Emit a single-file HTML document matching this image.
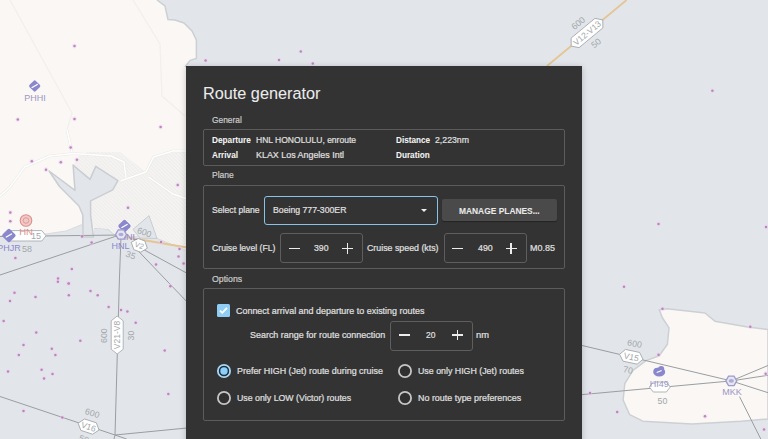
<!DOCTYPE html>
<html><head><meta charset="utf-8"><style>
html,body{margin:0;padding:0;}
body{width:768px;height:439px;overflow:hidden;position:relative;background:#e1e5e9;font-family:"Liberation Sans",sans-serif;}
.map{position:absolute;left:0;top:0;}
.t{position:absolute;white-space:nowrap;-webkit-text-stroke:0.2px currentColor;}
.dlg{position:absolute;background:#333333;box-shadow:0 1px 6px rgba(0,0,0,0.22);}
.box{position:absolute;border:1px solid #5c5c5c;border-radius:2px;}
.sel{position:absolute;border:1.6px solid #86c4ea;border-radius:3px;box-sizing:border-box;}
.caret{position:absolute;width:0;height:0;border-left:3.3px solid transparent;border-right:3.3px solid transparent;border-top:3.6px solid #f0f0f0;}
.btn{position:absolute;background:#4a4a4a;border-radius:2px;box-shadow:0 1px 1px rgba(0,0,0,0.3);}
.step{position:absolute;border:1px solid #5e5e5e;border-radius:3px;box-sizing:border-box;}
.minus{position:absolute;height:1.6px;background:#ececec;}
.vbar{position:absolute;width:1.6px;background:#ececec;}
.chk{position:absolute;width:13px;height:13px;background:#8fcdf5;border-radius:1.5px;}
.chk svg{position:absolute;left:0;top:0;}
.rd{position:absolute;}
</style></head>
<body>
<svg class="map" width="768" height="439" viewBox="0 0 768 439"><rect width="768" height="439" fill="#e2e6ea"/>
<polygon points="0,0 157,0 165,6 168,19.5 175,20 184,23 192,31 196.4,40 196.4,58.5 190.2,60.4 186.7,64.7 185,67 200,70 200,252 186,250 157,238 132,236 114,234 108,229 94,228 94,236 82,236 82,224.6 66,231 46,234 0,236" fill="#faf7f4"/>
<polyline points="157,0 165,6 168,19.5 175,20 184,23 192,31 196.4,40 196.4,58.5 190.2,60.4 186.7,64.7 185,67" fill="none" stroke="#cdd0d3" stroke-width="1.5"/>
<polyline points="186,250 157,238 132,236 114,234 108,229 94,228" fill="none" stroke="#cdd0d3" stroke-width="1.2"/>
<polyline points="82,224.6 66,231 46,234 0,236" fill="none" stroke="#d9dbdc" stroke-width="1"/>
<defs><pattern id="hatch" width="2.6" height="2.6" patternUnits="userSpaceOnUse" patternTransform="rotate(-45)">
<rect width="2.6" height="2.6" fill="#f4f3f2"/><line x1="0" y1="0" x2="0" y2="2.6" stroke="#e6e5e4" stroke-width="0.8"/></pattern></defs>
<polygon points="88,152 120,152 146,172 153.5,157 186,150 200,150 200,252 186,250 157,238 132,236 114,234 108,229 94,228 90.6,215 90.6,200.8 112.7,189.8 117.9,180.7 95.8,166.4 90,179.4 75,190.4 73.1,165.1 80,155" fill="url(#hatch)"/>
<polygon points="49.1,171 75,190.4 73.1,165.1 90,179.4 95.8,166.4 117.9,180.7 112.7,189.8 90.6,200.8 90.6,215 92.3,227.9 93.5,237 83,237 82.8,215 79,206 59.5,186.5" fill="#e2e6ea" stroke="#cacdd1" stroke-width="1.5" stroke-linejoin="round"/>
<polygon points="133,229.4 149,215.7 157,238.5 140,238" fill="#e2e6ea" stroke="#c9ccd0" stroke-width="1"/>
<polyline points="0,196 10,187 24.7,167 49.5,156 74,153.5 111,156 124,162 126,178" fill="none" stroke="#e9e8e6" stroke-width="2.6" stroke-linejoin="round"/>
<polyline points="0,196 10,187 24.7,167 49.5,156 74,153.5 111,156 124,162 126,178" fill="none" stroke="#ffffff" stroke-width="1.5" stroke-linejoin="round"/>
<polyline points="121,180.7 146,172 153.5,157 173,151 190,151" fill="none" stroke="#e9e8e6" stroke-width="2.6" stroke-linejoin="round"/>
<polyline points="121,180.7 146,172 153.5,157 173,151 190,151" fill="none" stroke="#ffffff" stroke-width="1.5" stroke-linejoin="round"/>
<polyline points="148.5,177 173,194 190,200" fill="none" stroke="#e9e8e6" stroke-width="2.6" stroke-linejoin="round"/>
<polyline points="148.5,177 173,194 190,200" fill="none" stroke="#ffffff" stroke-width="1.5" stroke-linejoin="round"/>
<polyline points="67,130 72,152" fill="none" stroke="#e9e8e6" stroke-width="2.6" stroke-linejoin="round"/>
<polyline points="67,130 72,152" fill="none" stroke="#ffffff" stroke-width="1.5" stroke-linejoin="round"/>
<polyline points="10,0 72,113 67,130" fill="none" stroke="#f1f0ee" stroke-width="1.2"/>
<polyline points="133,0 160,44 162,96 185,116" fill="none" stroke="#f1f0ee" stroke-width="1.2"/>
<polygon points="659.2,309.8 667.4,308.8 705,313 714.9,321.2 747.7,327.1 768,329.4 768,419 741,421.2 692,423.9 642.8,421.2 629.7,414.7 623.1,400 624.8,383.5 633,370.4 646,360.6 659.2,355.7 667.4,344.2 669,327.8 662.5,318" fill="#faf7f4" stroke="#cdd0d3" stroke-width="1.5" stroke-linejoin="round"/>
<polyline points="0,236.5 121,235" fill="none" stroke="#9a9ea2" stroke-width="1"/>
<polyline points="0,275 121,234.5" fill="none" stroke="#9a9ea2" stroke-width="1"/>
<polyline points="121,236 119.4,280 115,435 114,439" fill="none" stroke="#9a9ea2" stroke-width="1"/>
<polyline points="0,396.5 115,435 126.7,439" fill="none" stroke="#9a9ea2" stroke-width="1"/>
<polyline points="115,435 190,427.7" fill="none" stroke="#9a9ea2" stroke-width="1"/>
<polyline points="142.6,249 187.8,273.7" fill="none" stroke="#9a9ea2" stroke-width="1"/>
<polyline points="136.4,249 190,305" fill="none" stroke="#9a9ea2" stroke-width="1"/>
<polyline points="580,345 731.3,380.9 768,392.7" fill="none" stroke="#9a9ea2" stroke-width="1"/>
<polyline points="580,394.8 731.3,380.9" fill="none" stroke="#9a9ea2" stroke-width="1"/>
<polyline points="731.3,380.9 768,365.5" fill="none" stroke="#9a9ea2" stroke-width="1"/>
<polyline points="731.3,380.9 768,375.3" fill="none" stroke="#9a9ea2" stroke-width="1"/>
<polyline points="739.5,396.6 760.8,439" fill="none" stroke="#9a9ea2" stroke-width="1"/>
<polyline points="125,237 190,248" fill="none" stroke="#e6c594" stroke-width="1.8"/>
<polyline points="547,66 626.6,0" fill="none" stroke="#e6c594" stroke-width="1.8"/>
<circle cx="74.5" cy="46" r="2.4" fill="#ecd2ef" opacity="0.45"/><circle cx="74.5" cy="46" r="1.25" fill="#bd84bd"/>
<circle cx="17.8" cy="119.6" r="2.4" fill="#ecd2ef" opacity="0.45"/><circle cx="17.8" cy="119.6" r="1.25" fill="#bd84bd"/>
<circle cx="74.5" cy="119" r="2.4" fill="#ecd2ef" opacity="0.45"/><circle cx="74.5" cy="119" r="1.25" fill="#bd84bd"/>
<circle cx="160.6" cy="127" r="2.4" fill="#ecd2ef" opacity="0.45"/><circle cx="160.6" cy="127" r="1.25" fill="#bd84bd"/>
<circle cx="70.7" cy="147.5" r="2.4" fill="#ecd2ef" opacity="0.45"/><circle cx="70.7" cy="147.5" r="1.25" fill="#bd84bd"/>
<circle cx="205.6" cy="60.4" r="2.4" fill="#ecd2ef" opacity="0.45"/><circle cx="205.6" cy="60.4" r="1.25" fill="#bd84bd"/>
<circle cx="279" cy="60" r="2.4" fill="#ecd2ef" opacity="0.45"/><circle cx="279" cy="60" r="1.25" fill="#bd84bd"/>
<circle cx="31.8" cy="161.2" r="2.4" fill="#ecd2ef" opacity="0.45"/><circle cx="31.8" cy="161.2" r="1.25" fill="#bd84bd"/>
<circle cx="60.8" cy="162.2" r="2.4" fill="#ecd2ef" opacity="0.45"/><circle cx="60.8" cy="162.2" r="1.25" fill="#bd84bd"/>
<circle cx="76.9" cy="159.8" r="2.4" fill="#ecd2ef" opacity="0.45"/><circle cx="76.9" cy="159.8" r="1.25" fill="#bd84bd"/>
<circle cx="46" cy="169.7" r="2.4" fill="#ecd2ef" opacity="0.45"/><circle cx="46" cy="169.7" r="1.25" fill="#bd84bd"/>
<circle cx="177.7" cy="185" r="2.4" fill="#ecd2ef" opacity="0.45"/><circle cx="177.7" cy="185" r="1.25" fill="#bd84bd"/>
<circle cx="128" cy="207.7" r="2.4" fill="#ecd2ef" opacity="0.45"/><circle cx="128" cy="207.7" r="1.25" fill="#bd84bd"/>
<circle cx="10.3" cy="212.5" r="2.4" fill="#ecd2ef" opacity="0.45"/><circle cx="10.3" cy="212.5" r="1.25" fill="#bd84bd"/>
<circle cx="10.3" cy="221.3" r="2.4" fill="#ecd2ef" opacity="0.45"/><circle cx="10.3" cy="221.3" r="1.25" fill="#bd84bd"/>
<circle cx="82" cy="236.4" r="2.4" fill="#ecd2ef" opacity="0.45"/><circle cx="82" cy="236.4" r="1.25" fill="#bd84bd"/>
<circle cx="91.6" cy="242.5" r="2.4" fill="#ecd2ef" opacity="0.45"/><circle cx="91.6" cy="242.5" r="1.25" fill="#bd84bd"/>
<circle cx="15.4" cy="258" r="2.4" fill="#ecd2ef" opacity="0.45"/><circle cx="15.4" cy="258" r="1.25" fill="#bd84bd"/>
<circle cx="71.8" cy="269" r="2.4" fill="#ecd2ef" opacity="0.45"/><circle cx="71.8" cy="269" r="1.25" fill="#bd84bd"/>
<circle cx="58" cy="278.4" r="2.4" fill="#ecd2ef" opacity="0.45"/><circle cx="58" cy="278.4" r="1.25" fill="#bd84bd"/>
<circle cx="68.4" cy="283.5" r="2.4" fill="#ecd2ef" opacity="0.45"/><circle cx="68.4" cy="283.5" r="1.25" fill="#bd84bd"/>
<circle cx="57.9" cy="281.8" r="2.4" fill="#ecd2ef" opacity="0.45"/><circle cx="57.9" cy="281.8" r="1.25" fill="#bd84bd"/>
<circle cx="68.8" cy="283.6" r="2.4" fill="#ecd2ef" opacity="0.45"/><circle cx="68.8" cy="283.6" r="1.25" fill="#bd84bd"/>
<circle cx="14.5" cy="292.7" r="2.4" fill="#ecd2ef" opacity="0.45"/><circle cx="14.5" cy="292.7" r="1.25" fill="#bd84bd"/>
<circle cx="10" cy="301" r="2.4" fill="#ecd2ef" opacity="0.45"/><circle cx="10" cy="301" r="1.25" fill="#bd84bd"/>
<circle cx="35.5" cy="297" r="2.4" fill="#ecd2ef" opacity="0.45"/><circle cx="35.5" cy="297" r="1.25" fill="#bd84bd"/>
<circle cx="68.8" cy="295.2" r="2.4" fill="#ecd2ef" opacity="0.45"/><circle cx="68.8" cy="295.2" r="1.25" fill="#bd84bd"/>
<circle cx="90.5" cy="290.9" r="2.4" fill="#ecd2ef" opacity="0.45"/><circle cx="90.5" cy="290.9" r="1.25" fill="#bd84bd"/>
<circle cx="97.7" cy="295.2" r="2.4" fill="#ecd2ef" opacity="0.45"/><circle cx="97.7" cy="295.2" r="1.25" fill="#bd84bd"/>
<circle cx="108.6" cy="307" r="2.4" fill="#ecd2ef" opacity="0.45"/><circle cx="108.6" cy="307" r="1.25" fill="#bd84bd"/>
<circle cx="121" cy="310" r="2.4" fill="#ecd2ef" opacity="0.45"/><circle cx="121" cy="310" r="1.25" fill="#bd84bd"/>
<circle cx="127.4" cy="311.5" r="2.4" fill="#ecd2ef" opacity="0.45"/><circle cx="127.4" cy="311.5" r="1.25" fill="#bd84bd"/>
<circle cx="135.7" cy="322.7" r="2.4" fill="#ecd2ef" opacity="0.45"/><circle cx="135.7" cy="322.7" r="1.25" fill="#bd84bd"/>
<circle cx="3.6" cy="321" r="2.4" fill="#ecd2ef" opacity="0.45"/><circle cx="3.6" cy="321" r="1.25" fill="#bd84bd"/>
<circle cx="36.2" cy="332.5" r="2.4" fill="#ecd2ef" opacity="0.45"/><circle cx="36.2" cy="332.5" r="1.25" fill="#bd84bd"/>
<circle cx="80.3" cy="340.8" r="2.4" fill="#ecd2ef" opacity="0.45"/><circle cx="80.3" cy="340.8" r="1.25" fill="#bd84bd"/>
<circle cx="23.5" cy="345" r="2.4" fill="#ecd2ef" opacity="0.45"/><circle cx="23.5" cy="345" r="1.25" fill="#bd84bd"/>
<circle cx="18.8" cy="355" r="2.4" fill="#ecd2ef" opacity="0.45"/><circle cx="18.8" cy="355" r="1.25" fill="#bd84bd"/>
<circle cx="51.8" cy="348.8" r="2.4" fill="#ecd2ef" opacity="0.45"/><circle cx="51.8" cy="348.8" r="1.25" fill="#bd84bd"/>
<circle cx="55.4" cy="355" r="2.4" fill="#ecd2ef" opacity="0.45"/><circle cx="55.4" cy="355" r="1.25" fill="#bd84bd"/>
<circle cx="164.7" cy="350.6" r="2.4" fill="#ecd2ef" opacity="0.45"/><circle cx="164.7" cy="350.6" r="1.25" fill="#bd84bd"/>
<circle cx="41.6" cy="369.8" r="2.4" fill="#ecd2ef" opacity="0.45"/><circle cx="41.6" cy="369.8" r="1.25" fill="#bd84bd"/>
<circle cx="8" cy="371.6" r="2.4" fill="#ecd2ef" opacity="0.45"/><circle cx="8" cy="371.6" r="1.25" fill="#bd84bd"/>
<circle cx="52.5" cy="374" r="2.4" fill="#ecd2ef" opacity="0.45"/><circle cx="52.5" cy="374" r="1.25" fill="#bd84bd"/>
<circle cx="44" cy="378.4" r="2.4" fill="#ecd2ef" opacity="0.45"/><circle cx="44" cy="378.4" r="1.25" fill="#bd84bd"/>
<circle cx="168.3" cy="394" r="2.4" fill="#ecd2ef" opacity="0.45"/><circle cx="168.3" cy="394" r="1.25" fill="#bd84bd"/>
<circle cx="23.5" cy="411" r="2.4" fill="#ecd2ef" opacity="0.45"/><circle cx="23.5" cy="411" r="1.25" fill="#bd84bd"/>
<circle cx="62.3" cy="417.5" r="2.4" fill="#ecd2ef" opacity="0.45"/><circle cx="62.3" cy="417.5" r="1.25" fill="#bd84bd"/>
<circle cx="712.4" cy="90.8" r="2.4" fill="#ecd2ef" opacity="0.45"/><circle cx="712.4" cy="90.8" r="1.25" fill="#bd84bd"/>
<circle cx="658.5" cy="224" r="2.4" fill="#ecd2ef" opacity="0.45"/><circle cx="658.5" cy="224" r="1.25" fill="#bd84bd"/>
<circle cx="766" cy="227" r="2.4" fill="#ecd2ef" opacity="0.45"/><circle cx="766" cy="227" r="1.25" fill="#bd84bd"/>
<circle cx="624" cy="286.8" r="2.4" fill="#ecd2ef" opacity="0.45"/><circle cx="624" cy="286.8" r="1.25" fill="#bd84bd"/>
<circle cx="662.5" cy="308.8" r="2.4" fill="#ecd2ef" opacity="0.45"/><circle cx="662.5" cy="308.8" r="1.25" fill="#bd84bd"/>
<circle cx="750.3" cy="326.8" r="2.4" fill="#ecd2ef" opacity="0.45"/><circle cx="750.3" cy="326.8" r="1.25" fill="#bd84bd"/>
<circle cx="658.5" cy="354.7" r="2.4" fill="#ecd2ef" opacity="0.45"/><circle cx="658.5" cy="354.7" r="1.25" fill="#bd84bd"/>
<circle cx="617.2" cy="412" r="2.4" fill="#ecd2ef" opacity="0.45"/><circle cx="617.2" cy="412" r="1.25" fill="#bd84bd"/>
<circle cx="705" cy="416.3" r="2.4" fill="#ecd2ef" opacity="0.45"/><circle cx="705" cy="416.3" r="1.25" fill="#bd84bd"/>
<circle cx="765.7" cy="373.7" r="2.4" fill="#ecd2ef" opacity="0.45"/><circle cx="765.7" cy="373.7" r="1.25" fill="#bd84bd"/>
<circle cx="764" cy="429.4" r="2.4" fill="#ecd2ef" opacity="0.45"/><circle cx="764" cy="429.4" r="1.25" fill="#bd84bd"/>
<circle cx="590" cy="393" r="2.4" fill="#ecd2ef" opacity="0.45"/><circle cx="590" cy="393" r="1.25" fill="#bd84bd"/>
<circle cx="161" cy="242" r="2.4" fill="#ecd2ef" opacity="0.45"/><circle cx="161" cy="242" r="1.25" fill="#bd84bd"/>
<circle cx="179.5" cy="249" r="2.4" fill="#ecd2ef" opacity="0.45"/><circle cx="179.5" cy="249" r="1.25" fill="#bd84bd"/>
<circle cx="178.5" cy="256.4" r="2.4" fill="#ecd2ef" opacity="0.45"/><circle cx="178.5" cy="256.4" r="1.25" fill="#bd84bd"/>
<circle cx="156" cy="264.6" r="2.4" fill="#ecd2ef" opacity="0.45"/><circle cx="156" cy="264.6" r="1.25" fill="#bd84bd"/>
<circle cx="183.6" cy="263.6" r="2.4" fill="#ecd2ef" opacity="0.45"/><circle cx="183.6" cy="263.6" r="1.25" fill="#bd84bd"/>
<circle cx="170.3" cy="286.2" r="2.4" fill="#ecd2ef" opacity="0.45"/><circle cx="170.3" cy="286.2" r="1.25" fill="#bd84bd"/>
<circle cx="300.8" cy="51.5" r="2.4" fill="#ecd2ef" opacity="0.45"/><circle cx="300.8" cy="51.5" r="1.25" fill="#bd84bd"/>
<circle cx="312.8" cy="63.6" r="2.4" fill="#ecd2ef" opacity="0.45"/><circle cx="312.8" cy="63.6" r="1.25" fill="#bd84bd"/>
<circle cx="26" cy="220.5" r="5.8" fill="#f0c8c6" stroke="#dc8f8c" stroke-width="1.1"/><circle cx="26" cy="220.5" r="2.8" fill="none" stroke="#dc8f8c" stroke-width="0.8"/>
<g transform="translate(587,33) rotate(-39.6)"><polygon points="-20.5,0 -15.5,-6.2 15.5,-6.2 20.5,0 15.5,6.2 -15.5,6.2" fill="#ffffff" stroke="#a9adb1" stroke-width="0.9"/><text x="0" y="3.06" text-anchor="middle" font-size="8.5" fill="#a3a7ab" font-family="Liberation Sans">V12-V13</text></g>
<text transform="translate(578.2,23.1) rotate(-39.6)" x="0" y="3.17" text-anchor="middle" font-size="8.8" fill="#a3a7ab" font-family="Liberation Sans">600</text>
<text transform="translate(595.9,43) rotate(-39.6)" x="0" y="3.17" text-anchor="middle" font-size="8.8" fill="#a3a7ab" font-family="Liberation Sans">50</text>
<g transform="translate(117.2,335) rotate(-90)"><polygon points="-19.0,0 -14.2,-6.0 14.2,-6.0 19.0,0 14.2,6.0 -14.2,6.0" fill="#ffffff" stroke="#a9adb1" stroke-width="0.9"/><text x="0" y="3.06" text-anchor="middle" font-size="8.5" fill="#a3a7ab" font-family="Liberation Sans">V21-V8</text></g>
<text transform="translate(103.7,335.6) rotate(-90)" x="0" y="3.17" text-anchor="middle" font-size="8.8" fill="#a3a7ab" font-family="Liberation Sans">600</text>
<text transform="translate(131,335.6) rotate(-90)" x="0" y="3.17" text-anchor="middle" font-size="8.8" fill="#a3a7ab" font-family="Liberation Sans">30</text>
<g transform="translate(88.6,426.6) rotate(18)"><polygon points="-11.0,0 -6.2,-6.0 6.2,-6.0 11.0,0 6.2,6.0 -6.2,6.0" fill="#ffffff" stroke="#a9adb1" stroke-width="0.9"/><text x="0" y="3.06" text-anchor="middle" font-size="8.5" fill="#a3a7ab" font-family="Liberation Sans">V16</text></g>
<text transform="translate(92.3,413) rotate(18)" x="0" y="3.17" text-anchor="middle" font-size="8.8" fill="#a3a7ab" font-family="Liberation Sans">600</text>
<text transform="translate(84,439) rotate(18)" x="0" y="3.17" text-anchor="middle" font-size="8.8" fill="#a3a7ab" font-family="Liberation Sans">50</text>
<g transform="translate(25,235.8) rotate(0)"><polygon points="-21.0,0 -16.8,-5.2 16.8,-5.2 21.0,0 16.8,5.2 -16.8,5.2" fill="#ffffff" stroke="#a9adb1" stroke-width="0.9"/><text x="0" y="3.06" text-anchor="middle" font-size="8.5" fill="#a3a7ab" font-family="Liberation Sans"></text></g>
<text transform="translate(36,236.2) rotate(0)" x="0" y="3.24" text-anchor="middle" font-size="9" fill="#a3a7ab" font-family="Liberation Sans">15</text>
<g transform="translate(139.3,245.3) rotate(20)"><polygon points="-8.5,0 -3.7,-6.0 3.7,-6.0 8.5,0 3.7,6.0 -3.7,6.0" fill="#ffffff" stroke="#a9adb1" stroke-width="0.9"/><text x="0" y="2.70" text-anchor="middle" font-size="7.5" fill="#a3a7ab" font-family="Liberation Sans">V2</text></g>
<text transform="translate(144.4,232.2) rotate(20)" x="0" y="3.17" text-anchor="middle" font-size="8.8" fill="#a3a7ab" font-family="Liberation Sans">600</text>
<text transform="translate(130.8,255) rotate(20)" x="0" y="3.17" text-anchor="middle" font-size="8.8" fill="#a3a7ab" font-family="Liberation Sans">35</text>
<g transform="translate(631.3,356.8) rotate(12)"><polygon points="-12.0,0 -7.2,-6.0 7.2,-6.0 12.0,0 7.2,6.0 -7.2,6.0" fill="#ffffff" stroke="#a9adb1" stroke-width="0.9"/><text x="0" y="3.06" text-anchor="middle" font-size="8.5" fill="#a3a7ab" font-family="Liberation Sans">V15</text></g>
<text transform="translate(634.6,343.5) rotate(10)" x="0" y="3.17" text-anchor="middle" font-size="8.8" fill="#a3a7ab" font-family="Liberation Sans">600</text>
<text transform="translate(628,369.8) rotate(10)" x="0" y="3.17" text-anchor="middle" font-size="8.8" fill="#a3a7ab" font-family="Liberation Sans">70</text>
<g transform="translate(659.8,387) rotate(0)"><polygon points="-10.5,0 -6.5,-5.0 6.5,-5.0 10.5,0 6.5,5.0 -6.5,5.0" fill="#ffffff" stroke="#a9adb1" stroke-width="0.9"/><text x="0" y="3.06" text-anchor="middle" font-size="8.5" fill="#a3a7ab" font-family="Liberation Sans"></text></g>
<text transform="translate(662.5,400.6) rotate(0)" x="0" y="3.17" text-anchor="middle" font-size="8.8" fill="#a3a7ab" font-family="Liberation Sans">50</text>
<g transform="translate(34.7,86)"><rect x="-4.4" y="-4.4" width="8.8" height="8.8" rx="1.6" fill="#8a87cc" transform="rotate(45)"/><line x1="-2.6" y1="1.5" x2="2.6" y2="-1.5" stroke="#fff" stroke-width="1.4" stroke-linecap="round"/></g>
<g transform="translate(8.9,235.5)"><rect x="-5.2" y="-5.2" width="10.4" height="10.4" rx="1.6" fill="#8a87cc" transform="rotate(45)"/><line x1="-2.6" y1="1.5" x2="2.6" y2="-1.5" stroke="#fff" stroke-width="1.4" stroke-linecap="round"/></g>
<g transform="translate(124.5,226)"><rect x="-4.8" y="-4.8" width="9.6" height="9.6" rx="1.6" fill="#8a87cc" transform="rotate(45)"/><line x1="-2.6" y1="1.5" x2="2.6" y2="-1.5" stroke="#fff" stroke-width="1.4" stroke-linecap="round"/></g>
<g transform="translate(659.2,372)"><ellipse rx="6" ry="4.5" fill="#8a87cc"/><circle cx="-3" cy="-1.5" r="2.5" fill="#8a87cc"/><circle cx="2" cy="-3" r="3" fill="#8a87cc"/><line x1="-2.5" y1="0.5" x2="2.5" y2="-1.5" stroke="#fff" stroke-width="1.1"/></g>
<text transform="translate(35,97.5) rotate(0)" x="0" y="3.24" text-anchor="middle" font-size="9" fill="#9a98c6" font-family="Liberation Sans">PHHI</text>
<text transform="translate(9,248) rotate(0)" x="0" y="3.24" text-anchor="middle" font-size="9" fill="#8a87cc" font-family="Liberation Sans">PHJR</text>
<text transform="translate(27,248.5) rotate(0)" x="0" y="3.24" text-anchor="middle" font-size="9" fill="#a3a7ab" font-family="Liberation Sans">58</text>
<text transform="translate(26,231.5) rotate(0)" x="0" y="3.42" text-anchor="middle" font-size="9.5" fill="#dc8f8c" font-family="Liberation Sans">HN</text>
<text transform="translate(120.5,245.3) rotate(0)" x="0" y="3.24" text-anchor="middle" font-size="9" fill="#8a87cc" font-family="Liberation Sans">HNL</text>
<text transform="translate(128.5,236.8) rotate(0)" x="0" y="3.24" text-anchor="middle" font-size="9" fill="#8a87cc" font-family="Liberation Sans">HNL</text>
<text transform="translate(659.2,383.5) rotate(0)" x="0" y="3.24" text-anchor="middle" font-size="9" fill="#9a98c6" font-family="Liberation Sans">HI49</text>
<text transform="translate(732,391.7) rotate(0)" x="0" y="3.24" text-anchor="middle" font-size="9" fill="#9a98c6" font-family="Liberation Sans">MKK</text>
<g transform="translate(731.3,380.9)"><polygon points="-5.5,0 -2.75,-4.7 2.75,-4.7 5.5,0 2.75,4.7 -2.75,4.7" fill="#e6e5f2" stroke="#9d9bcb" stroke-width="1.3"/><ellipse rx="2.6" ry="1.8" fill="#aeacd4"/></g>
<g transform="translate(121,234.5)"><polygon points="-5.5,0 -2.75,-4.7 2.75,-4.7 5.5,0 2.75,4.7 -2.75,4.7" fill="#e6e5f2" stroke="#9d9bcb" stroke-width="1.3"/><ellipse rx="2.6" ry="1.8" fill="#aeacd4"/></g></svg>
<div class="dlg" style="left:186px;top:66px;width:396px;height:400px;"></div><div class="t" style="left:203.35px;top:84.99px;font-size:16.2px;line-height:16.2px;color:#ececec;font-weight:normal;transform:scaleX(1.0035);transform-origin:0 0;-webkit-text-stroke:0.05px currentColor;">Route generator</div>
<div class="t" style="left:212.37px;top:115.58px;font-size:9.0px;line-height:9.0px;color:#cdcdcd;font-weight:normal;transform:scaleX(0.9312);transform-origin:0 0;">General</div>
<div class="box" style="left:203px;top:129px;width:360px;height:35px;"></div><div class="t" style="left:212.04px;top:136.38px;font-size:9.0px;line-height:9.0px;color:#f4f4f4;font-weight:bold;transform:scaleX(0.9150);transform-origin:0 0;-webkit-text-stroke:0.05px currentColor;">Departure</div>
<div class="t" style="left:256.29px;top:136.38px;font-size:9.0px;line-height:9.0px;color:#e0e0e0;font-weight:normal;transform:scaleX(0.9461);transform-origin:0 0;">HNL HONOLULU, enroute</div>
<div class="t" style="left:212.37px;top:151.28px;font-size:9.0px;line-height:9.0px;color:#f4f4f4;font-weight:bold;transform:scaleX(0.9117);transform-origin:0 0;-webkit-text-stroke:0.05px currentColor;">Arrival</div>
<div class="t" style="left:256.26px;top:151.28px;font-size:9.0px;line-height:9.0px;color:#e0e0e0;font-weight:normal;transform:scaleX(0.9892);transform-origin:0 0;">KLAX Los Angeles Intl</div>
<div class="t" style="left:395.75px;top:136.38px;font-size:9.0px;line-height:9.0px;color:#f4f4f4;font-weight:bold;transform:scaleX(0.9061);transform-origin:0 0;-webkit-text-stroke:0.05px currentColor;">Distance</div>
<div class="t" style="left:434.56px;top:136.38px;font-size:9.0px;line-height:9.0px;color:#e0e0e0;font-weight:normal;transform:scaleX(0.9693);transform-origin:0 0;">2,223nm</div>
<div class="t" style="left:395.74px;top:151.28px;font-size:9.0px;line-height:9.0px;color:#f4f4f4;font-weight:bold;transform:scaleX(0.9111);transform-origin:0 0;-webkit-text-stroke:0.05px currentColor;">Duration</div>
<div class="t" style="left:211.89px;top:171.18px;font-size:9.0px;line-height:9.0px;color:#cdcdcd;font-weight:normal;transform:scaleX(0.9455);transform-origin:0 0;">Plane</div>
<div class="box" style="left:203px;top:185px;width:360px;height:82px;"></div><div class="t" style="left:212.06px;top:205.78px;font-size:9.0px;line-height:9.0px;color:#e0e0e0;font-weight:normal;transform:scaleX(0.9612);transform-origin:0 0;">Select plane</div>
<div class="sel" style="left:264px;top:195.5px;width:174px;height:29.5px;"></div><div class="t" style="left:272.78px;top:205.78px;font-size:9.0px;line-height:9.0px;color:#e0e0e0;font-weight:normal;transform:scaleX(0.9653);transform-origin:0 0;">Boeing 777-300ER</div>
<div class="caret" style="left:421px;top:208.5px;"></div><div class="btn" style="left:442px;top:199px;width:115px;height:22px;"></div><div class="t" style="left:458.70px;top:206.79px;font-size:8.4px;line-height:8.4px;color:#eaeaea;font-weight:bold;transform:scaleX(1.0025);transform-origin:0 0;-webkit-text-stroke:0.05px currentColor;">MANAGE PLANES...</div>
<div class="t" style="left:212.06px;top:244.38px;font-size:9.0px;line-height:9.0px;color:#e0e0e0;font-weight:normal;transform:scaleX(0.9609);transform-origin:0 0;">Cruise level (FL)</div>
<div class="step" style="left:279.5px;top:233px;width:83px;height:30px;"></div><div class="minus" style="left:289.2px;top:247.6px;width:11px;"></div><div class="minus" style="left:342.2px;top:247.6px;width:11px;"></div><div class="vbar" style="left:346.9px;top:243.1px;height:10.6px;"></div><div class="t" style="left:314.16px;top:244.28px;font-size:9.0px;line-height:9.0px;color:#e0e0e0;font-weight:normal;transform:scaleX(0.9655);transform-origin:0 0;">390</div>
<div class="t" style="left:367.06px;top:244.38px;font-size:9.0px;line-height:9.0px;color:#e0e0e0;font-weight:normal;transform:scaleX(0.9799);transform-origin:0 0;">Cruise speed (kts)</div>
<div class="step" style="left:443.5px;top:233px;width:83px;height:30px;"></div><div class="minus" style="left:452.3px;top:247.6px;width:11px;"></div><div class="minus" style="left:505.6px;top:247.6px;width:11px;"></div><div class="vbar" style="left:510.3px;top:243.1px;height:10.6px;"></div><div class="t" style="left:477.50px;top:244.28px;font-size:9.0px;line-height:9.0px;color:#e0e0e0;font-weight:normal;transform:scaleX(0.9831);transform-origin:0 0;">490</div>
<div class="t" style="left:530.15px;top:244.28px;font-size:9.0px;line-height:9.0px;color:#e0e0e0;font-weight:normal;transform:scaleX(0.9958);transform-origin:0 0;">M0.85</div>
<div class="t" style="left:212.06px;top:274.58px;font-size:9.0px;line-height:9.0px;color:#cdcdcd;font-weight:normal;transform:scaleX(0.9705);transform-origin:0 0;">Options</div>
<div class="box" style="left:203px;top:288px;width:360px;height:131px;"></div><div class="chk" style="left:217px;top:304px;"><svg width="13" height="13" viewBox="0 0 13 13"><polyline points="3,6.6 5.3,8.8 10,3.8" fill="none" stroke="#ffffff" stroke-width="1.8"/></svg></div><div class="t" style="left:236.05px;top:306.68px;font-size:9.0px;line-height:9.0px;color:#e0e0e0;font-weight:normal;transform:scaleX(0.9934);transform-origin:0 0;">Connect arrival and departure to existing routes</div>
<div class="t" style="left:250.35px;top:331.38px;font-size:9.0px;line-height:9.0px;color:#e0e0e0;font-weight:normal;transform:scaleX(0.9930);transform-origin:0 0;">Search range for route connection</div>
<div class="step" style="left:389.5px;top:320.5px;width:83px;height:30px;"></div><div class="minus" style="left:398.9px;top:334.4px;width:11px;"></div><div class="minus" style="left:451.9px;top:334.4px;width:11px;"></div><div class="vbar" style="left:456.6px;top:329.9px;height:10.6px;"></div><div class="t" style="left:426.37px;top:331.08px;font-size:9.0px;line-height:9.0px;color:#e0e0e0;font-weight:normal;transform:scaleX(0.9368);transform-origin:0 0;">20</div>
<div class="t" style="left:476.48px;top:331.38px;font-size:9.0px;line-height:9.0px;color:#e0e0e0;font-weight:normal;transform:scaleX(1.0348);transform-origin:0 0;">nm</div>
<svg class="rd" style="left:216px;top:363px" width="16" height="16" viewBox="0 0 16 16"><circle cx="8" cy="8" r="6.1" fill="none" stroke="#a9d3ef" stroke-width="1.9"/><circle cx="8" cy="8" r="5.1" fill="#163449"/><circle cx="8" cy="8" r="3.7" fill="#8fcff7"/></svg><div class="t" style="left:236.86px;top:366.68px;font-size:9.0px;line-height:9.0px;color:#e0e0e0;font-weight:normal;transform:scaleX(0.9925);transform-origin:0 0;">Prefer HIGH (Jet) route during cruise</div>
<svg class="rd" style="left:396.8px;top:363px" width="16" height="16" viewBox="0 0 16 16"><circle cx="8" cy="8" r="6.1" fill="#303030" stroke="#c6c6c6" stroke-width="1.8"/></svg><div class="t" style="left:417.91px;top:366.68px;font-size:9.0px;line-height:9.0px;color:#e0e0e0;font-weight:normal;transform:scaleX(0.9800);transform-origin:0 0;">Use only HIGH (Jet) routes</div>
<svg class="rd" style="left:216px;top:389.9px" width="16" height="16" viewBox="0 0 16 16"><circle cx="8" cy="8" r="6.1" fill="#303030" stroke="#c6c6c6" stroke-width="1.8"/></svg><div class="t" style="left:237.11px;top:393.68px;font-size:9.0px;line-height:9.0px;color:#e0e0e0;font-weight:normal;transform:scaleX(0.9763);transform-origin:0 0;">Use only LOW (Victor) routes</div>
<svg class="rd" style="left:396.8px;top:389.9px" width="16" height="16" viewBox="0 0 16 16"><circle cx="8" cy="8" r="6.1" fill="#303030" stroke="#c6c6c6" stroke-width="1.8"/></svg><div class="t" style="left:417.66px;top:393.68px;font-size:9.0px;line-height:9.0px;color:#e0e0e0;font-weight:normal;transform:scaleX(0.9913);transform-origin:0 0;">No route type preferences</div>

</body></html>
